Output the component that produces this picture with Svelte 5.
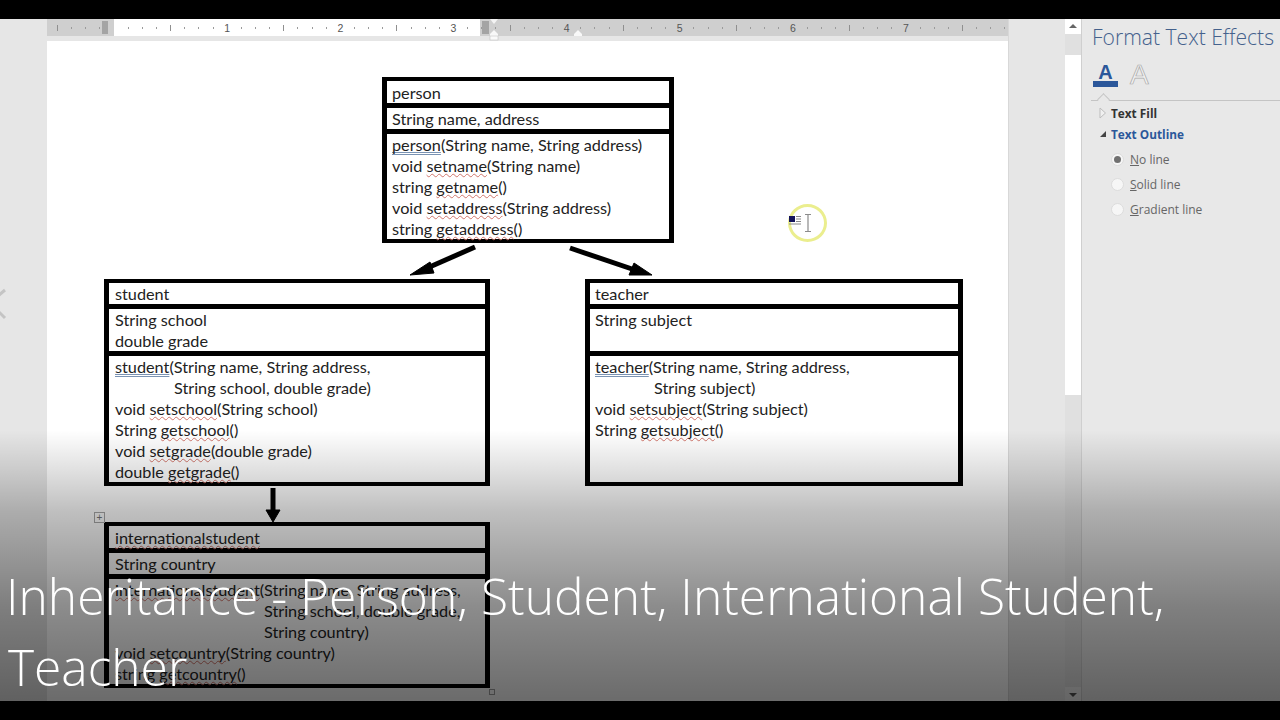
<script>
  // ruler marks: one every 1/8 inch, from -0.5in up to 7.9in
  const marks = [];
  for (let i = -4; i < 64; i++) {
    marks.push({ i, num: i % 8 === 0 && i > 0 ? i / 8 : null, tick: Math.abs(i % 8) === 4, blank: i === 0 });
  }
</script>

<div class="screen">
  <div class="bar top"></div>

  <div class="main">
    <div class="gutter left">
      <svg class="chev" width="8" height="40" viewBox="0 0 8 40">
        <path d="M-2 11 L5 5 M-2 26 L5 33" stroke="#c4c4c4" stroke-width="3" fill="none" />
      </svg>
    </div>

    <div class="doc">
      <div class="ruler">
        {#each marks as m}
          <div class="mark">
            {#if m.num}
              <span class="num">{m.num}</span>
            {:else if m.tick}
              <span class="tick"></span>
            {:else if !m.blank}
              <span class="dot"></span>
            {/if}
          </div>
        {/each}
        <svg class="handles" width="961" height="22" viewBox="0 0 961 22">
          <rect x="55" y="2" width="6" height="13" fill="#a4a4a4" />
          <rect x="435" y="2" width="7" height="13" fill="#a4a4a4" />
          <path d="M443 0 L451 0 L447 5 Z" fill="#f4f4f4" />
          <path d="M447 11 L451 15 L451 17 L443 17 L443 15 Z" fill="#f8f8f8" />
          <rect x="443" y="17" width="8" height="4" fill="#fafafa" stroke="#bbb" stroke-width="0.5" />
          <path d="M531 11 L535 15 L535 17 L527 17 L527 15 Z" fill="#f8f8f8" />
        </svg>
      </div>

      <div class="page">
        <svg class="arrows" width="961" height="500" viewBox="0 0 961 500">
          <path d="M428 206 L378 228" stroke="#000" stroke-width="5" />
          <path d="M363 234 L383 221 L387 232 Z" fill="#000" stroke="#000" />
          <path d="M523 207 L588 229" stroke="#000" stroke-width="5" />
          <path d="M605 234 L582 234 L587 222 Z" fill="#000" stroke="#000" />
          <path d="M226 447 L226 470" stroke="#000" stroke-width="5" />
          <path d="M226 481 L219 469 L233 469 Z" fill="#000" stroke="#000" />
        </svg>

        <div class="box person">
          <div class="row head">person</div>
          <div class="row">String name, address</div>
          <div class="row">
            <div><span class="gr">person</span>(String name, String address)</div>
            <div>void <span class="sp">setname</span>(String name)</div>
            <div>string <span class="sp">getname</span>()</div>
            <div>void <span class="sp">setaddress</span>(String address)</div>
            <div>string <span class="sp">getaddress</span>()</div>
          </div>
        </div>

        <div class="pair">
          <div class="box student">
            <div class="row">student</div>
            <div class="row">
              <div>String school</div>
              <div>double grade</div>
            </div>
            <div class="row">
              <div><span class="gr">student</span>(String name, String address,</div>
              <div class="wrap1">String school, double grade)</div>
              <div>void <span class="sp">setschool</span>(String school)</div>
              <div>String <span class="sp">getschool</span>()</div>
              <div>void <span class="sp">setgrade</span>(double grade)</div>
              <div>double <span class="sp">getgrade</span>()</div>
            </div>
          </div>

          <div class="box teacher">
            <div class="row">teacher</div>
            <div class="row lines2">String subject</div>
            <div class="row lines6">
              <div><span class="gr">teacher</span>(String name, String address,</div>
              <div class="wrap1">String subject)</div>
              <div>void <span class="sp">setsubject</span>(String subject)</div>
              <div>String <span class="sp">getsubject</span>()</div>
            </div>
          </div>
        </div>

        <div class="box intl">
          <span class="table-grip">+</span>
          <div class="row head"><span class="sp">internationalstudent</span></div>
          <div class="row">String country</div>
          <div class="row">
            <div><span class="sp">internationalstudent</span>(String name, String address,</div>
            <div class="wrap2">String school, double grade,</div>
            <div class="wrap2">String country)</div>
            <div>void <span class="sp">setcountry</span>(String country)</div>
            <div>string <span class="sp">getcountry</span>()</div>
          </div>
          <span class="table-size"></span>
        </div>

        <div class="cursor">
          <svg class="para" width="13" height="10" viewBox="0 0 13 10">
            <rect x="0" y="1" width="6" height="6" fill="#14145a" />
            <path d="M7 1.500H12M7 4H12M7 6.500H12M0 9H12" stroke="#8a8a8a" stroke-width="1" />
          </svg>
          <svg class="beam" width="8" height="18" viewBox="0 0 8 18">
            <path d="M1 .5H7M1 17.500H7M4 .5V17.500" stroke="#8c8c8c" stroke-width="1.200" fill="none" />
          </svg>
        </div>
      </div>
    </div>

    <div class="gutter right"></div>

    <div class="scroll">
      <div class="up"></div>
      <div class="track-top"></div>
      <div class="thumb"></div>
      <div class="track-bottom"></div>
      <div class="down"></div>
    </div>

    <aside class="panel">
      <h2>Format Text Effects</h2>
      <div class="tabs">
        <span class="tab on">A</span>
        <span class="tab outline">A</span>
      </div>
      <div class="divider"><span class="notch"></span></div>
      <div class="section">
        <svg class="tri" width="8" height="12" viewBox="0 0 8 12"><path d="M1 1 L6.500 6 L1 11 Z" fill="#f0f0f0" stroke="#bdbdbd" /></svg>
        Text Fill
      </div>
      <div class="section active">
        <svg class="tri" width="8" height="12" viewBox="0 0 8 12"><path d="M7 3 V9 H1 Z" fill="#444" /></svg>
        Text Outline
      </div>
      <div class="radios">
        <div class="radio"><span class="disc checked"></span><span><u>N</u>o line</span></div>
        <div class="radio"><span class="disc"></span><span><u>S</u>olid line</span></div>
        <div class="radio"><span class="disc"></span><span><u>G</u>radient line</span></div>
      </div>
    </aside>
  </div>

  <div class="bar bottom"></div>

  <div class="shade"></div>
  <div class="caption">Inheritance - Person, Student, International Student, Teacher</div>
</div>

<style>
  :global(body) {
    margin: 0;
    background: #000;
  }

  .screen {
    position: relative;
    width: 1280px;
    height: 720px;
    display: flex;
    flex-direction: column;
    overflow: hidden;
    font-family: Lato, "Liberation Sans", sans-serif;
  }

  .bar {
    background: #000;
    flex: none;
    position: relative;
    z-index: 3;
  }

  .bar.top {
    height: 19px;
  }

  .bar.bottom {
    height: 19px;
  }

  .main {
    flex: 1;
    display: flex;
    min-height: 0;
    background: #e6e6e6;
  }

  .gutter.left {
    width: 47px;
    flex: none;
    overflow: hidden;
    padding-top: 266px;
    box-sizing: border-box;
  }

  .chev {
    display: block;
  }

  .doc {
    width: 961px;
    flex: none;
    display: flex;
    flex-direction: column;
  }

  .gutter.right {
    width: 57px;
    flex: none;
    border-left: 1px solid #d8d8d8;
    box-sizing: border-box;
  }

  /* ruler */
  .ruler {
    position: relative;
    height: 17px;
    flex: none;
    display: flex;
    padding-left: 3.500px;
    background: linear-gradient(to right, #cfcfcf 67px, #fff 67px, #fff 433px, #cfcfcf 433px);
  }

  .mark {
    flex: none;
    width: 14.150px;
    display: flex;
    align-items: center;
    justify-content: center;
  }

  .num {
    font-size: 10.500px;
    color: #555;
    font-family: "Liberation Sans", sans-serif;
  }

  .tick {
    width: 1px;
    height: 6px;
    background: #8f8f8f;
  }

  .dot {
    width: 1px;
    height: 2px;
    background: #9a9a9a;
  }

  .handles {
    position: absolute;
    left: 0;
    top: 0;
  }

  /* page */
  .page {
    position: relative;
    margin-top: 5px;
    flex: 1;
    background: #fff;
    padding: 36px 0 0 57px;
    display: flex;
    flex-direction: column;
    align-items: flex-start;
    gap: 36px;
    font-size: 16.250px;
    line-height: 21px;
    color: #222;
  }

  .arrows {
    position: absolute;
    left: 0;
    top: 0;
  }

  .box {
    position: relative;
    box-sizing: border-box;
    background: #000;
    border: solid #000;
    border-width: 4px 5px;
    display: flex;
    flex-direction: column;
    gap: 5px;
  }

  .person {
    width: 292px;
    margin-left: 278px;
  }

  .student,
  .intl {
    width: 386px;
  }

  .teacher {
    width: 378px;
  }

  .pair {
    display: flex;
    gap: 95px;
  }

  .row {
    background: #fff;
    padding: 0 5px;
  }

  .student .row,
  .intl .row {
    padding-left: 6px;
  }

  .head {
    padding-top: 1px;
  }

  .lines2 {
    height: 42px;
  }

  .lines6 {
    height: 126px;
  }

  .wrap1 {
    padding-left: 59px;
  }

  .wrap2 {
    padding-left: 149px;
  }

  .sp {
    text-decoration: underline wavy #d0766c 1px;
    text-underline-offset: 1px;
    text-decoration-skip-ink: none;
  }

  .gr {
    text-decoration: underline double #7a93b3 1px;
    text-underline-offset: 1px;
    text-decoration-skip-ink: none;
  }

  .table-grip {
    position: absolute;
    left: -15px;
    top: -14px;
    width: 9px;
    height: 9px;
    border: 1px solid #a8a8a8;
    font: 10px/9px "Liberation Sans", sans-serif;
    text-align: center;
    color: #777;
  }

  .table-size {
    position: absolute;
    right: -10px;
    bottom: -11px;
    width: 4px;
    height: 4px;
    border: 1px solid #a0a0a0;
  }

  .cursor {
    position: absolute;
    left: 741px;
    top: 163px;
    width: 39px;
    height: 38px;
    box-sizing: border-box;
    border: 3px solid #ebee8e;
    border-radius: 50%;
  }

  .cursor svg {
    position: absolute;
  }

  .cursor .para {
    left: -2px;
    top: 8px;
  }

  .cursor .beam {
    left: 13px;
    top: 7px;
  }

  /* scrollbar */
  .scroll {
    width: 16px;
    flex: none;
    display: flex;
    flex-direction: column;
    background: #e0e0e0;
  }

  .up {
    height: 15px;
    background: #fff;
    position: relative;
  }

  .up::after {
    content: "";
    position: absolute;
    left: 4px;
    top: 5px;
    border: 4px solid transparent;
    border-top: 0;
    border-bottom: 4px solid #666;
  }

  .track-top {
    height: 21px;
    background: #e0e0e0;
  }

  .thumb {
    height: 340px;
    background: #fff;
  }

  .track-bottom {
    flex: 1;
    background: #e0e0e0;
  }

  .down {
    height: 14px;
    background: #f0f0f0;
    position: relative;
  }

  .down::after {
    content: "";
    position: absolute;
    left: 4px;
    top: 6px;
    border: 4px solid transparent;
    border-bottom: 0;
    border-top: 4px solid #555;
  }

  /* side panel */
  .panel {
    flex: 1;
    border-left: 1px solid #cfcfcf;
    background: #e8e8e8;
    padding-left: 9px;
    font-family: "Open Sans", sans-serif;
  }

  h2 {
    margin: 3px 0 0 1px;
    font-size: 21.100px;
    line-height: 30px;
    font-weight: 300;
    color: #44618c;
    white-space: nowrap;
  }

  .tabs {
    display: flex;
    gap: 12px;
    margin: 9px 0 0 2px;
    height: 39px;
  }

  .tab {
    width: 25px;
    font-family: "Liberation Sans", sans-serif;
    text-align: center;
  }

  .tab.on {
    height: 20px;
    font-size: 20px;
    font-weight: 700;
    line-height: 22px;
    color: #2b579a;
    border-bottom: 6px solid #2b579a;
  }

  .tab.outline {
    width: 17px;
    font-size: 28px;
    line-height: 27px;
    color: #f2f2f2;
    -webkit-text-stroke: 0.7px #aaa;
  }

  .divider {
    position: relative;
    height: 1px;
    background: #c4c4c4;
  }

  .notch {
    position: absolute;
    left: 8px;
    top: -5px;
    width: 9px;
    height: 9px;
    box-sizing: border-box;
    background: #e8e8e8;
    border: solid #c4c4c4;
    border-width: 1px 0 0 1px;
    transform: rotate(45deg);
  }

  .section {
    position: relative;
    margin-left: 20px;
    font-size: 11.800px;
    line-height: 21px;
    font-weight: 700;
    color: #333;
  }

  .divider + .section {
    margin-top: 2px;
  }

  .section.active {
    color: #2b579a;
  }

  .tri {
    position: absolute;
    left: -12px;
    top: 4px;
  }

  .radios {
    margin: 2px 0 0 29px;
  }

  .radio {
    height: 25px;
    display: flex;
    align-items: center;
    gap: 6px;
    font-size: 12px;
    color: #666;
  }

  .disc {
    width: 13px;
    height: 13px;
    margin-left: -9px;
    border-radius: 50%;
    background: #f6f6f6;
    border: 1px solid #dcdcdc;
    box-sizing: border-box;
    display: flex;
    align-items: center;
    justify-content: center;
  }

  .disc.checked::after {
    content: "";
    width: 7px;
    height: 7px;
    border-radius: 50%;
    background: #707070;
  }

  /* video title over the bottom of the frame */
  .shade {
    position: absolute;
    left: 0;
    right: 0;
    top: 430px;
    bottom: 19px;
    background: linear-gradient(to bottom, rgba(0, 0, 0, 0), rgba(0, 0, 0, 0.12) 15%, rgba(0, 0, 0, 0.25) 30%, rgba(0, 0, 0, 0.45) 65%, rgba(0, 0, 0, 0.58));
    z-index: 1;
  }

  .caption {
    position: absolute;
    left: 8px;
    top: 561px;
    width: 1200px;
    z-index: 2;
    font-family: "Open Sans", sans-serif;
    font-weight: 300;
    font-size: 49.700px;
    line-height: 71px;
    text-indent: -2px;
    color: #fff;
  }
</style>
